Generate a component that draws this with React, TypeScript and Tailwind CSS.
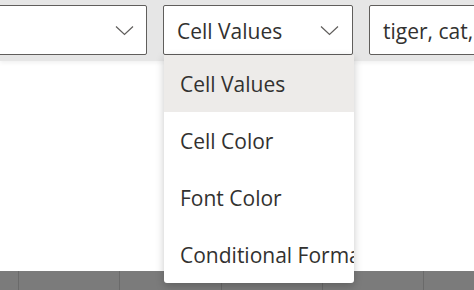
const options = ["Cell Values", "Cell Color", "Font Color", "Conditional Formatting"];

function Chevron() {
  return (
    <svg width="19" height="11" viewBox="0 0 19 11" className="shrink-0">
      <path d="M1 1.5 L9.5 9.5 L18 1.5" fill="none" stroke="#605e5c" strokeWidth="1.2" />
    </svg>
  );
}

export default function App() {
  return (
    <div
      className="relative h-[290px] w-[474px] overflow-hidden bg-white text-[#323130]"
      style={{ fontFamily: '"Open Sans", "Noto Sans", sans-serif' }}
    >
      {/* toolbar */}
      <div className="flex h-[61px] items-start gap-4 bg-[#e6e6e6] pt-[5px] shadow-[0_2px_4px_rgba(0,0,0,0.06)]">
        <div className="-ml-[43px] flex h-[50px] w-[190px] shrink-0 items-center justify-end rounded-[2px] border border-[#605e5c] bg-white pr-[12px]">
          <Chevron />
        </div>
        <div className="flex h-[50px] w-[190px] shrink-0 items-center justify-between rounded-[2px] border border-[#605e5c] bg-white pl-[13px] pr-[13px]">
          <span className="pt-[2px] text-[21px] leading-none">Cell Values</span>
          <Chevron />
        </div>
        <div className="flex h-[50px] w-[190px] shrink-0 items-center overflow-hidden rounded-[2px] border border-[#605e5c] bg-white pl-[13px]">
          <span className="whitespace-nowrap pt-[2px] text-[21px] leading-none">tiger, cat, dog</span>
        </div>
      </div>

      {/* sheet area */}
      <div className="h-[210px]" />
      <div className="flex h-[19px] bg-[#7b7b7b]">
        <div className="w-[19px] border-r border-[#6a6a6a]" />
        <div className="w-[101px] border-r border-[#6a6a6a]" />
        <div className="w-[102px] border-r border-[#6a6a6a]" />
        <div className="w-[101px] border-r border-[#6a6a6a]" />
        <div className="w-[101px] border-r border-[#6a6a6a]" />
      </div>

      {/* open menu */}
      <div className="absolute left-[164px] top-[55px] w-[190px] overflow-hidden rounded-b-[3px] bg-white shadow-[0_3px_8px_rgba(0,0,0,0.22)]">
        {options.map((o, i) => (
          <div
            key={o}
            className={`flex h-[57px] items-center whitespace-nowrap pl-[16px] pt-[3px] text-[21px] ${i === 0 ? "bg-[#edebe9]" : ""}`}
          >
            {o}
          </div>
        ))}
      </div>
    </div>
  );
}
